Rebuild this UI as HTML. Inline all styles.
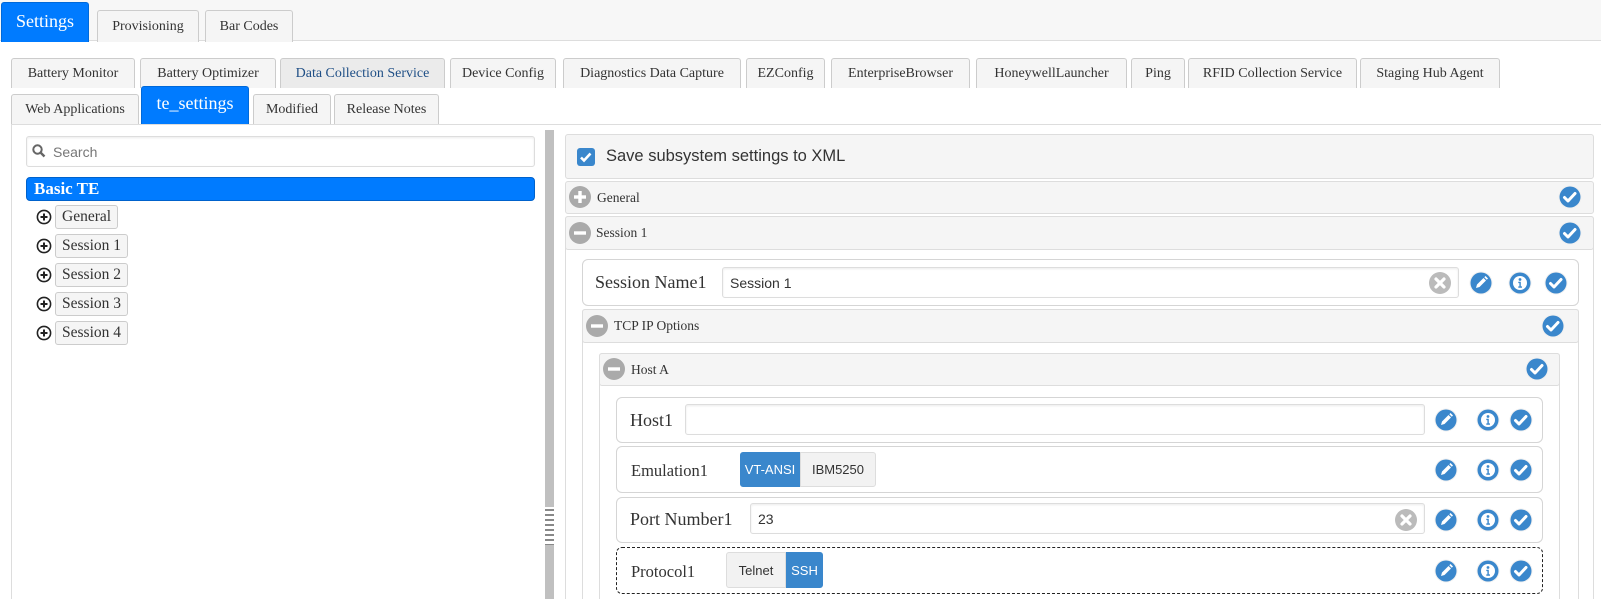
<!DOCTYPE html>
<html><head><meta charset="utf-8"><style>
*{box-sizing:border-box;margin:0;padding:0}
html{width:1601px;height:599px;overflow:hidden}
body{width:1601px;height:599px;overflow:hidden;background:#fff;position:relative;font-family:"Liberation Serif",serif;color:#333}
.a{position:absolute}
.tab{position:absolute;border:1px solid #ccc;border-bottom:none;border-radius:3px 3px 0 0;background:#f5f5f5;font-size:14px;display:flex;align-items:center;justify-content:center;color:#333}
.blue{background:#007bff;border-color:#0069d9;color:#fff}
.hdr{position:absolute;background:#f5f5f5;border:1px solid #ddd;border-radius:3px;font-size:13.5px;display:flex;align-items:center}
.row{position:absolute;background:#fff;border:1px solid #d5d5d5;border-radius:6px}
.inp{position:absolute;border:1px solid #ddd;border-radius:3px;background:#fff;box-shadow:inset 0 1px 2px rgba(0,0,0,.08);font-family:"Liberation Sans",sans-serif;font-size:14px;display:flex;align-items:center;padding-left:7px}
.lbl{position:absolute;color:#333}
.ic{position:absolute;width:24px;height:24px}
.btn{position:absolute;font-family:"Liberation Sans",sans-serif;font-size:13px;display:flex;align-items:center;justify-content:center;border:1px solid #ddd;background:#f2f2f2;color:#333}
.on{background:#3a87cc;border-color:#3a87cc;color:#fff}
.tree{position:absolute;left:55px;height:24px;border:1px solid #ccc;border-radius:3px;background:#f5f5f5;font-size:15.5px;padding:0 6px;display:flex;align-items:center}
.pan{position:absolute;border:1px solid #ddd;border-bottom:none;border-radius:3px 3px 0 0}
</style></head><body>
<svg width="0" height="0" style="position:absolute"><defs>
<g id="chk"><circle cx="12" cy="12" r="11.5" fill="#f0f0f0"/><circle cx="12" cy="12" r="10.5" fill="#3a87cc"/><path d="M6.5 12.5l3.5 3.5 7-7.5" stroke="#fff" stroke-width="3" fill="none" stroke-linecap="round" stroke-linejoin="round"/></g>
<g id="inf"><circle cx="12" cy="12" r="11.5" fill="#f0f0f0"/><circle cx="12" cy="12" r="10.5" fill="#3a87cc"/><circle cx="12" cy="12" r="7" fill="#fff"/><circle cx="12" cy="8.5" r="1.4" fill="#3a87cc"/><path d="M10.3 10.8h2.5v4.6h1.2v1.3h-3.7v-1.3h1.1v-3.3h-1.1z" fill="#3a87cc"/></g>
<g id="pen"><circle cx="12" cy="12" r="11.5" fill="#f0f0f0"/><circle cx="12" cy="12" r="10.5" fill="#3a87cc"/><path d="M7 17l1-3.5 6.5-6.5 2.5 2.5-6.5 6.5z" fill="#fff"/><path d="M15.3 6.2l1.2-1.2 2.5 2.5-1.2 1.2z" fill="#fff"/></g>
<g id="clr"><circle cx="12" cy="12" r="11" fill="#bbb"/><path d="M8 8l8 8M16 8l-8 8" stroke="#fff" stroke-width="3.2" stroke-linecap="round"/></g>
<g id="min"><circle cx="12" cy="12" r="11" fill="#aaa"/><rect x="6" y="10.3" width="12" height="3.4" fill="#fff"/></g>
<g id="pls"><circle cx="12" cy="12" r="11" fill="#aaa"/><rect x="6" y="10.3" width="12" height="3.4" fill="#fff"/><rect x="10.3" y="6" width="3.4" height="12" fill="#fff"/></g>
<g id="tp"><circle cx="8" cy="8" r="6.6" fill="#fff" stroke="#222" stroke-width="1.6"/><path d="M4.5 8h7M8 4.5v7" stroke="#222" stroke-width="2"/></g>
</defs></svg>

<div class="a" style="left:0;top:0;width:1601px;height:41px;background:#f7f7f7;border-bottom:1px solid #ddd"></div>
<div class="tab blue" style="left:1px;top:2px;width:88px;height:40px;font-size:18px;align-items:flex-start;padding-top:8px">Settings</div>
<div class="tab" style="left:97px;top:10px;width:102px;height:32px">Provisioning</div>
<div class="tab" style="left:205px;top:10px;width:88px;height:32px">Bar Codes</div>

<div class="tab" style="left:11px;top:58px;width:124px;height:30px">Battery Monitor</div>
<div class="tab" style="left:140px;top:58px;width:136px;height:30px">Battery Optimizer</div>
<div class="tab" style="left:280px;top:58px;width:165px;height:30px;background:#ebebeb;color:#1f4f86">Data Collection Service</div>
<div class="tab" style="left:450px;top:58px;width:106px;height:30px">Device Config</div>
<div class="tab" style="left:563px;top:58px;width:178px;height:30px">Diagnostics Data Capture</div>
<div class="tab" style="left:746px;top:58px;width:79px;height:30px">EZConfig</div>
<div class="tab" style="left:831px;top:58px;width:139px;height:30px">EnterpriseBrowser</div>
<div class="tab" style="left:976px;top:58px;width:151px;height:30px">HoneywellLauncher</div>
<div class="tab" style="left:1131px;top:58px;width:54px;height:30px">Ping</div>
<div class="tab" style="left:1188px;top:58px;width:169px;height:30px">RFID Collection Service</div>
<div class="tab" style="left:1360px;top:58px;width:140px;height:30px">Staging Hub Agent</div>

<div class="tab" style="left:11px;top:94px;width:128px;height:31px">Web Applications</div>
<div class="tab blue" style="left:141px;top:86px;width:108px;height:39px;font-size:18px;align-items:flex-start;padding-top:6px">te_settings</div>
<div class="tab" style="left:253px;top:94px;width:78px;height:31px">Modified</div>
<div class="tab" style="left:334px;top:94px;width:105px;height:31px">Release Notes</div>
<div class="a" style="left:11px;top:124px;width:1590px;height:1px;background:#ddd"></div>
<div class="a" style="left:11px;top:125px;width:1px;height:474px;background:#ddd"></div>

<div class="inp" style="left:26px;top:136px;width:509px;height:31px;color:#777;padding-left:26px">Search</div>
<svg class="a" style="left:32px;top:144px" width="14" height="14"><circle cx="5.5" cy="5.5" r="4.2" fill="none" stroke="#666" stroke-width="2"/><path d="M8.5 8.5l4 4" stroke="#666" stroke-width="2.4"/></svg>
<div class="a" style="left:26px;top:177px;width:509px;height:24px;background:#007bff;border:1px solid #0062cc;border-radius:4px;color:#fff;font-weight:bold;font-size:17px;padding-left:7px;line-height:22px">Basic TE</div>
<svg class="a" style="left:36px;top:209px" width="16" height="16"><use href="#tp"/></svg><div class="tree" style="top:205px">General</div>
<svg class="a" style="left:36px;top:238px" width="16" height="16"><use href="#tp"/></svg><div class="tree" style="top:234px">Session 1</div>
<svg class="a" style="left:36px;top:267px" width="16" height="16"><use href="#tp"/></svg><div class="tree" style="top:263px">Session 2</div>
<svg class="a" style="left:36px;top:296px" width="16" height="16"><use href="#tp"/></svg><div class="tree" style="top:292px">Session 3</div>
<svg class="a" style="left:36px;top:325px" width="16" height="16"><use href="#tp"/></svg><div class="tree" style="top:321px">Session 4</div>

<div class="a" style="left:545px;top:130px;width:9px;height:469px;background:#c0c0c0"></div>
<div class="a" style="left:545px;top:507px;width:9px;height:38px;background:repeating-linear-gradient(#fff 0 2px,#888 2px 4px,#fff 4px 5px)"></div>

<div class="hdr" style="left:565px;top:134px;width:1029px;height:45px;font-family:'Liberation Sans',sans-serif;font-size:16.5px;padding-left:40px">Save subsystem settings to XML</div>
<div class="a" style="left:577px;top:148px;width:18px;height:18px;background:#3a87cc;border-radius:3px"></div>
<svg class="a" style="left:577px;top:148px" width="18" height="18"><path d="M4 9.5l3 3 6.5-7" stroke="#fff" stroke-width="2.6" fill="none"/></svg>

<div class="hdr" style="left:565px;top:181px;width:1029px;height:33px;padding-left:31px">General</div>
<svg class="ic" style="left:568px;top:185px"><use href="#pls"/></svg>
<svg class="ic" style="left:1558px;top:185px"><use href="#chk"/></svg>

<div class="pan" style="left:565px;top:216px;width:1029px;height:383px"></div>
<div class="hdr" style="left:565px;top:216px;width:1029px;height:34px;padding-left:30px">Session 1</div>
<svg class="ic" style="left:568px;top:221px"><use href="#min"/></svg>
<svg class="ic" style="left:1558px;top:221px"><use href="#chk"/></svg>

<div class="row" style="left:582px;top:259px;width:997px;height:47px"></div>
<div class="lbl" style="left:595px;top:272px;font-size:18px">Session Name1</div>
<div class="inp" style="left:722px;top:267px;width:737px;height:31px">Session 1</div>
<svg class="ic" style="left:1428px;top:271px"><use href="#clr"/></svg>
<svg class="ic" style="left:1469px;top:271px"><use href="#pen"/></svg>
<svg class="ic" style="left:1508px;top:271px"><use href="#inf"/></svg>
<svg class="ic" style="left:1544px;top:271px"><use href="#chk"/></svg>

<div class="pan" style="left:582px;top:309px;width:997px;height:290px"></div>
<div class="hdr" style="left:582px;top:309px;width:997px;height:34px;padding-left:31px">TCP IP Options</div>
<svg class="ic" style="left:585px;top:314px"><use href="#min"/></svg>
<svg class="ic" style="left:1541px;top:314px"><use href="#chk"/></svg>

<div class="pan" style="left:599px;top:353px;width:961px;height:246px"></div>
<div class="hdr" style="left:599px;top:353px;width:961px;height:33px;padding-left:31px">Host A</div>
<svg class="ic" style="left:602px;top:357px"><use href="#min"/></svg>
<svg class="ic" style="left:1525px;top:357px"><use href="#chk"/></svg>

<div class="row" style="left:616px;top:397px;width:927px;height:46px"></div>
<div class="lbl" style="left:630px;top:410px;font-size:18px">Host1</div>
<div class="inp" style="left:685px;top:404px;width:740px;height:31px"></div>
<svg class="ic" style="left:1434px;top:408px"><use href="#pen"/></svg>
<svg class="ic" style="left:1476px;top:408px"><use href="#inf"/></svg>
<svg class="ic" style="left:1509px;top:408px"><use href="#chk"/></svg>

<div class="row" style="left:616px;top:446px;width:927px;height:47px"></div>
<div class="lbl" style="left:631px;top:461px;font-size:16.5px">Emulation1</div>
<div class="btn on" style="left:740px;top:452px;width:60px;height:35px;border-radius:3px 0 0 3px">VT-ANSI</div>
<div class="btn" style="left:800px;top:452px;width:76px;height:35px;border-radius:0 3px 3px 0">IBM5250</div>
<svg class="ic" style="left:1434px;top:458px"><use href="#pen"/></svg>
<svg class="ic" style="left:1476px;top:458px"><use href="#inf"/></svg>
<svg class="ic" style="left:1509px;top:458px"><use href="#chk"/></svg>

<div class="row" style="left:616px;top:497px;width:927px;height:46px"></div>
<div class="lbl" style="left:630px;top:509px;font-size:18px">Port Number1</div>
<div class="inp" style="left:750px;top:503px;width:675px;height:31px">23</div>
<svg class="ic" style="left:1394px;top:508px"><use href="#clr"/></svg>
<svg class="ic" style="left:1434px;top:508px"><use href="#pen"/></svg>
<svg class="ic" style="left:1476px;top:508px"><use href="#inf"/></svg>
<svg class="ic" style="left:1509px;top:508px"><use href="#chk"/></svg>

<div class="row" style="left:616px;top:547px;width:927px;height:47px;border:1px dashed #222"></div>
<div class="lbl" style="left:631px;top:562px;font-size:16.5px">Protocol1</div>
<div class="btn" style="left:726px;top:552px;width:60px;height:36px;border-radius:3px 0 0 3px">Telnet</div>
<div class="btn on" style="left:786px;top:552px;width:37px;height:36px;border-radius:0 3px 3px 0">SSH</div>
<svg class="ic" style="left:1434px;top:559px"><use href="#pen"/></svg>
<svg class="ic" style="left:1476px;top:559px"><use href="#inf"/></svg>
<svg class="ic" style="left:1509px;top:559px"><use href="#chk"/></svg>
</body></html>
